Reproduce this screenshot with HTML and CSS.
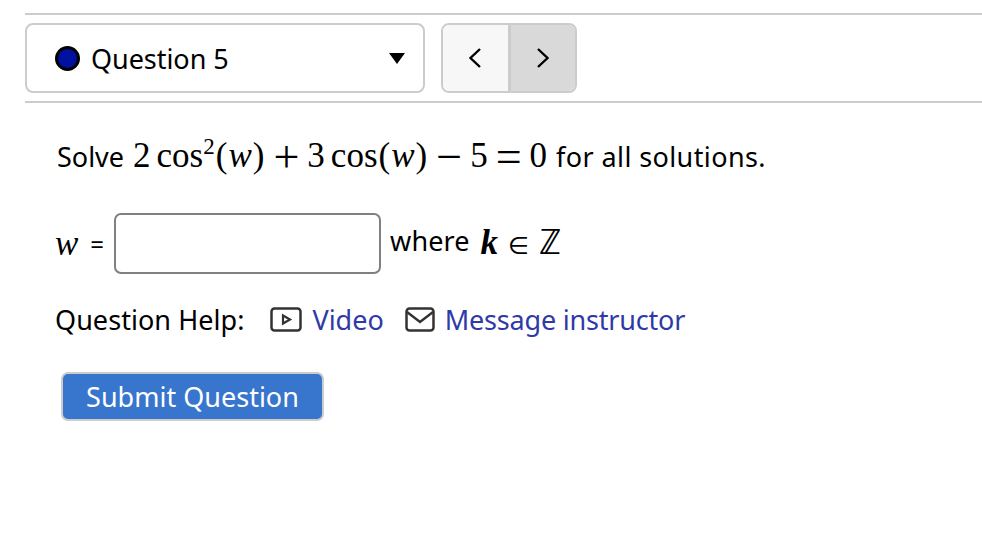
FILE: index.html
```html
<!DOCTYPE html>
<html lang="en">
<head>
    <meta charset="UTF-8">
    <title>Question 5</title>
    <link rel="stylesheet" href="styles.css">
</head>
<body>
    <div class="nav-bar">
        <div class="select-box">
            <span class="dot"></span>
            <span class="select-label">Question 5</span>
            <span class="caret"></span>
        </div>
        <div class="pager">
            <div class="page-btn">
                <svg width="14" height="22" viewBox="0 0 14 22"><path d="M12 2 2.500 11 12 20" fill="none" stroke="#000" stroke-width="2.400"/></svg>
            </div>
            <div class="page-btn next">
                <svg width="14" height="22" viewBox="0 0 14 22"><path d="M2 2 11.500 11 2 20" fill="none" stroke="#000" stroke-width="2.400"/></svg>
            </div>
        </div>
    </div>

    <div class="question">
        <p class="prompt">
            <span>Solve</span>
            <span class="math">2<span class="thin"></span>cos<sup>2</sup><span class="paren">(<i>w</i>)</span><span class="op">+</span>3<span class="thin"></span>cos<span class="paren">(<i>w</i>)</span><span class="op">−</span>5<span class="op">=</span>0</span>
            <span class="tail">for all solutions.</span>
        </p>
        <div class="answer">
            <span class="math var"><i>w</i></span>
            <span class="equals">=</span>
            <input class="answer-input" type="text">
            <span class="where">where</span>
            <span class="math set"><b><i>k</i></b><span class="member">∈</span>ℤ</span>
        </div>
        <div class="help">
            <span class="help-label">Question Help:</span>
            <a class="help-link" href="#">
                <svg width="32" height="26" viewBox="0 0 32 26"><rect x="1.500" y="1.500" width="29" height="22" rx="3" fill="none" stroke="#333" stroke-width="2.500"/><path d="M13 8.500 20 12.500 13 16.500Z" fill="none" stroke="#333" stroke-width="2.200"/></svg>
                Video
            </a>
            <a class="help-link" href="#">
                <svg width="30" height="26" viewBox="0 0 30 26"><rect x="1.500" y="1.500" width="27" height="22" rx="3" fill="none" stroke="#333" stroke-width="2.500"/><path d="M2 5 15 15 28 5" fill="none" stroke="#333" stroke-width="2.500"/></svg>
                <span class="msg">Message instructor</span>
            </a>
        </div>
        <button class="submit" type="button">Submit Question</button>
    </div>
</body>
</html>
```

FILE: styles.css
```css
* {
    padding: 0;
    margin: 0;
    box-sizing: border-box;
}
body {
    padding: 13px 0 0 25px;
    font-family: "Noto Sans", sans-serif;
    font-size: 27px;
    color: #000;
    background: #fff;
}
.nav-bar {
    display: flex;
    gap: 16px;
    height: 90px;
    padding-top: 8px;
    border-top: 2px solid #ccc;
    border-bottom: 2px solid #ccc;
}
.select-box {
    display: flex;
    align-items: center;
    width: 400px;
    height: 70px;
    padding: 0 18px 0 28px;
    border: 2px solid #ccc;
    border-radius: 8px;
}
.dot {
    width: 25px;
    height: 25px;
    margin-right: 11px;
    background: #00109f;
    border: 3px solid #000;
    border-radius: 50%;
}
.select-label {
    flex: 1;
    letter-spacing: -0.05px;
}
.caret {
    width: 0;
    height: 0;
    border-left: 8px solid transparent;
    border-right: 8px solid transparent;
    border-top: 11px solid #000;
}
.pager {
    display: flex;
    width: 136px;
    height: 70px;
    border: 2px solid #ccc;
    border-radius: 8px;
    overflow: hidden;
}
.page-btn {
    display: flex;
    align-items: center;
    justify-content: center;
    flex: 1;
    background: #f7f7f7;
}
.page-btn.next {
    background: #d9d9d9;
    border-left: 3px solid #ccc;
}
.question {
    padding: 0 0 0 32px;
}
.prompt {
    display: flex;
    gap: 8px;
    align-items: baseline;
    margin-top: 31px;
    line-height: 44px;
}
.tail {
    margin-left: 1px;
    letter-spacing: 0.4px;
}
.math {
    font-family: "Liberation Serif", serif;
    font-size: 35px;
}
.prompt .math {
    margin-left: 1px;
}
.math sup {
    font-size: 23px;
    line-height: 0;
}
.paren {
    padding-left: 1px;
    letter-spacing: 1px;
}
.thin {
    display: inline-block;
    width: 6px;
}
.op {
    display: inline-block;
    padding: 0 8px;
    font-size: 46px;
    font-weight: 300;
    line-height: 0;
    vertical-align: -5px;
}
.answer {
    display: flex;
    align-items: center;
    gap: 9px;
    margin-top: 34px;
    margin-left: -2px;
    height: 61px;
}
.var {
    margin-right: 3px;
}
.equals {
    font-size: 24px;
    margin-right: 1px;
}
.answer-input {
    width: 267px;
    height: 61px;
    border: 2px solid #808080;
    border-radius: 7px;
    background: #fff;
}
.where,
.set {
    position: relative;
    top: -3px;
}
.where {
    letter-spacing: 0.1px;
}
.set {
    margin-left: 2px;
}
.member {
    padding: 0 10px;
    font-family: "DejaVu Sans", sans-serif;
    font-size: 24px;
}
.help {
    display: flex;
    align-items: center;
    margin-top: 27px;
    margin-left: -2px;
}
.help-label {
    margin-right: 26px;
    letter-spacing: 0.05px;
}
.help-link {
    display: flex;
    align-items: center;
    gap: 10px;
    margin-right: 21px;
    color: #2f3aa8;
    text-decoration: none;
}
.msg {
    letter-spacing: -0.2px;
}
.submit {
    display: block;
    width: 263px;
    height: 49px;
    margin-top: 34px;
    margin-left: 4px;
    font: inherit;
    color: #fff;
    background: #3875cd;
    border: 2px solid #ccc;
    border-radius: 7px;
}
```
